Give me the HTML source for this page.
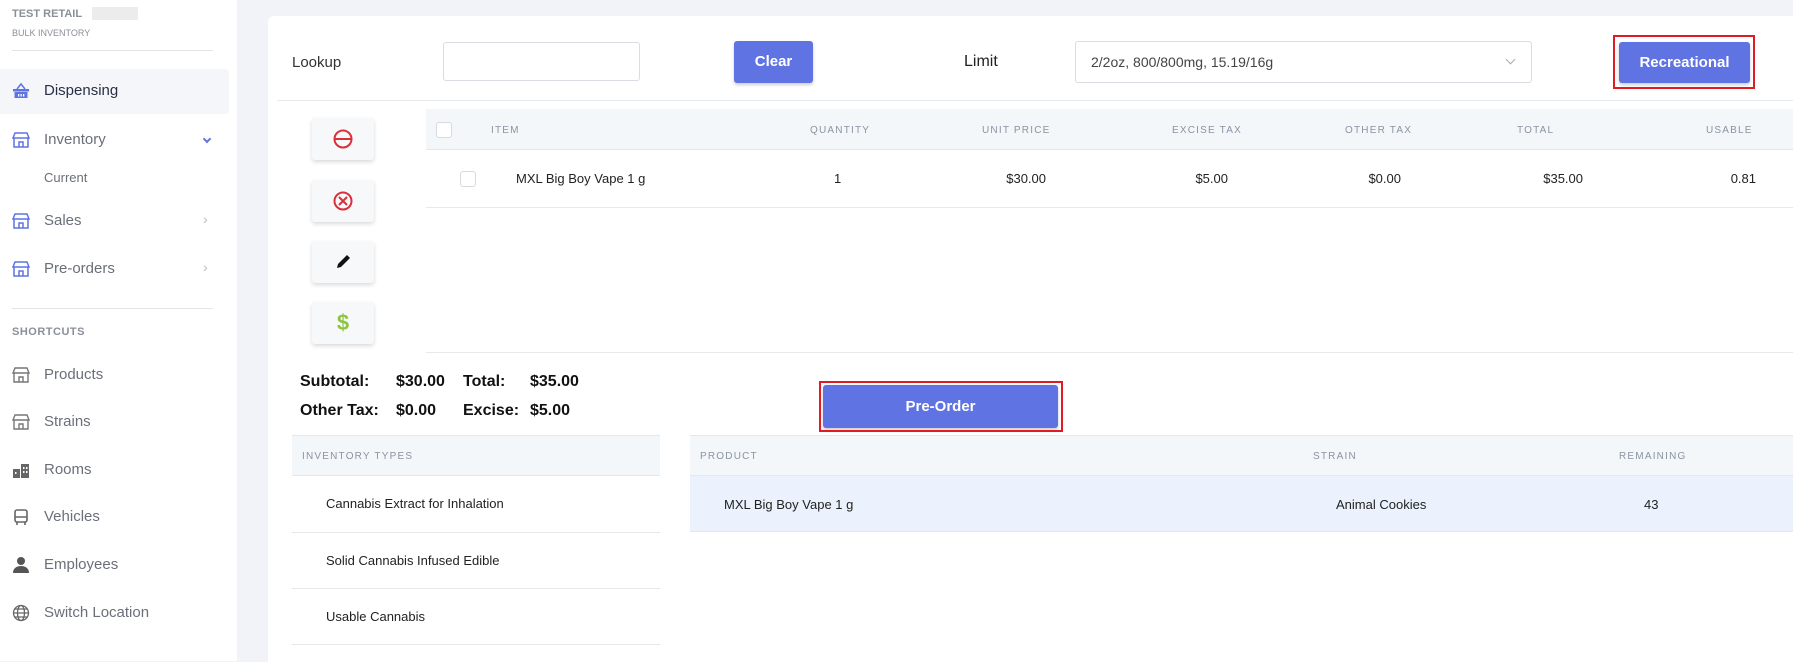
<!DOCTYPE html>
<html><head><meta charset="utf-8"><style>
*{box-sizing:border-box;margin:0;padding:0}
body{width:1793px;height:661px;overflow:hidden;background:#f1f3f8;font-family:"Liberation Sans",sans-serif;position:relative;color:#222}
.a{position:absolute;white-space:nowrap}
#side{position:absolute;left:0;top:0;width:237px;height:661px;background:#fff}
.nav{position:absolute;left:44px;font-size:15px;color:#6b6f7a}
.ic{position:absolute;left:12px;width:18px;height:18px}
#card{position:absolute;left:268px;top:16px;width:1525px;height:646px;background:#fff;border-radius:6px 0 0 0}
.btn{position:absolute;background:#5f73e3;color:#fff;font-weight:bold;font-size:15px;border-radius:3px;text-align:center;box-shadow:0 2px 3px rgba(0,0,0,.2)}
.th{position:absolute;font-size:10px;letter-spacing:1.2px;color:#8a93a3}
.td{position:absolute;font-size:13px;color:#222}
.ab{position:absolute;left:312px;width:62px;height:42px;background:#f7f8fa;border-radius:3px;box-shadow:0 2px 4px rgba(0,0,0,.15)}
.cb{position:absolute;width:16px;height:16px;border:1px solid #d6d9df;border-radius:3px;background:#fff}
.tot{position:absolute;font-size:16px;font-weight:bold;color:#111}
.red{position:absolute;border:2px solid #e01b24}
.chev{position:absolute;left:203px;color:#bbb;font-size:14px}
</style></head><body>
<div id="side">
<div class="a" style="left:12px;top:8px;font-size:11px;font-weight:bold;color:#8a8f99">TEST RETAIL</div>
<div class="a" style="left:92px;top:7px;width:46px;height:13px;background:#ececec"></div>
<div class="a" style="left:12px;top:28px;font-size:9px;color:#8a8f99">BULK INVENTORY</div>
<div class="a" style="left:12px;top:50px;width:201px;height:1px;background:#e2e4e8"></div>
<div class="a" style="left:0;top:69px;width:229px;height:45px;background:#f4f6fa;border-radius:0 4px 4px 0"></div>
<svg class="ic" style="top:82px" viewBox="0 0 18 18"><path d="M5 7 L9 2 L13 7" stroke="#5f73e3" stroke-width="1.5" fill="none"/><rect x="1" y="7" width="16" height="2.5" fill="#5f73e3"/><rect x="2.5" y="10" width="13" height="6" fill="#5f73e3"/><rect x="6" y="12" width="1.3" height="2.5" fill="#fff"/><rect x="8.5" y="12" width="1.3" height="2.5" fill="#fff"/><rect x="11" y="12" width="1.3" height="2.5" fill="#fff"/></svg>
<div class="nav" style="top:82px;color:#2b2f45">Dispensing</div>
<svg class="ic" style="top:131px" viewBox="0 0 18 18" fill="none" stroke="#5f73e3" stroke-width="1.5"><path d="M3 2h12l2 5H1z"/><path d="M2 7v9h14V7M7 16v-5h4v5"/></svg>
<div class="nav" style="top:131px">Inventory</div>
<div class="a" style="left:204px;top:136px;width:6px;height:6px;border-right:2px solid #5f73e3;border-bottom:2px solid #5f73e3;transform:rotate(45deg)"></div>
<div class="nav" style="top:170px;font-size:13px">Current</div>
<svg class="ic" style="top:212px" viewBox="0 0 18 18" fill="none" stroke="#5f73e3" stroke-width="1.5"><path d="M3 2h12l2 5H1z"/><path d="M2 7v9h14V7M7 16v-5h4v5"/></svg>
<div class="nav" style="top:212px">Sales</div>
<div class="chev" style="top:211px">&#8250;</div>
<svg class="ic" style="top:260px" viewBox="0 0 18 18" fill="none" stroke="#5f73e3" stroke-width="1.5"><path d="M3 2h12l2 5H1z"/><path d="M2 7v9h14V7M7 16v-5h4v5"/></svg>
<div class="nav" style="top:260px">Pre-orders</div>
<div class="chev" style="top:259px">&#8250;</div>
<div class="a" style="left:12px;top:308px;width:201px;height:1px;background:#e2e4e8"></div>
<div class="a" style="left:12px;top:326px;font-size:11px;font-weight:bold;color:#8a8f99;letter-spacing:.5px">SHORTCUTS</div>
<svg class="ic" style="top:366px" viewBox="0 0 18 18" fill="none" stroke="#777" stroke-width="1.4"><path d="M3 2h12l2 5H1z"/><path d="M2 7v9h14V7M7 16v-5h4v5"/></svg>
<div class="nav" style="top:366px">Products</div>
<svg class="ic" style="top:413px" viewBox="0 0 18 18" fill="none" stroke="#777" stroke-width="1.4"><path d="M3 2h12l2 5H1z"/><path d="M2 7v9h14V7M7 16v-5h4v5"/></svg>
<div class="nav" style="top:413px">Strains</div>
<svg class="ic" style="top:461px" viewBox="0 0 18 18" fill="#666"><rect x="1" y="8" width="7" height="9"/><rect x="9" y="3" width="8" height="14"/><rect x="3" y="11" width="1.5" height="2" fill="#fff"/><rect x="11" y="6" width="1.5" height="2" fill="#fff"/><rect x="14" y="6" width="1.5" height="2" fill="#fff"/><rect x="11" y="10" width="1.5" height="2" fill="#fff"/><rect x="14" y="10" width="1.5" height="2" fill="#fff"/></svg>
<div class="nav" style="top:461px">Rooms</div>
<svg class="ic" style="top:508px" viewBox="0 0 18 18" fill="none" stroke="#666" stroke-width="1.6"><rect x="3" y="2" width="12" height="12" rx="2"/><path d="M3 9h12M5 14v3M13 14v3"/></svg>
<div class="nav" style="top:508px">Vehicles</div>
<svg class="ic" style="top:556px" viewBox="0 0 18 18" fill="#555"><circle cx="9" cy="5" r="4"/><path d="M1 17c0-5 4-7 8-7s8 2 8 7z"/></svg>
<div class="nav" style="top:556px">Employees</div>
<svg class="ic" style="top:604px" viewBox="0 0 18 18" fill="none" stroke="#666" stroke-width="1.3"><circle cx="9" cy="9" r="7.5"/><ellipse cx="9" cy="9" rx="3.5" ry="7.5"/><path d="M1.5 9h15M3 5h12M3 13h12"/></svg>
<div class="nav" style="top:604px">Switch Location</div>
</div>

<div id="card"></div>
<div class="a" style="left:292px;top:54px;font-size:15px;color:#333">Lookup</div>
<div class="a" style="left:443px;top:42px;width:197px;height:39px;border:1px solid #d9dce2;border-radius:3px"></div>
<div class="btn" style="left:734px;top:41px;width:79px;height:42px;line-height:42px">Clear</div>
<div class="a" style="left:964px;top:53px;font-size:16px;color:#222">Limit</div>
<div class="a" style="left:1075px;top:41px;width:457px;height:42px;border:1px solid #d9dce2;border-radius:3px"></div>
<div class="a" style="left:1091px;top:54px;font-size:14px;color:#444">2/2oz, 800/800mg, 15.19/16g</div>
<div class="a" style="left:1507px;top:56px;width:7px;height:7px;border-right:1px solid #aaa;border-bottom:1px solid #aaa;transform:rotate(45deg)"></div>
<div class="btn" style="left:1619px;top:42px;width:131px;height:41px;line-height:41px">Recreational</div>
<div class="red" style="left:1613px;top:35px;width:142px;height:54px"></div>
<div class="a" style="left:277px;top:100px;width:1516px;height:1px;background:#e6e8ec"></div>

<div class="ab" style="top:118px"><svg style="position:absolute;left:21px;top:11px" width="20" height="20" viewBox="0 0 20 20" fill="none" stroke="#d9303a" stroke-width="2"><circle cx="10" cy="10" r="8.5"/><path d="M2 10h16"/></svg></div>
<div class="ab" style="top:180px"><svg style="position:absolute;left:21px;top:11px" width="20" height="20" viewBox="0 0 20 20" fill="none" stroke="#d9303a" stroke-width="2"><circle cx="10" cy="10" r="8.5"/><path d="M6 6l8 8M14 6l-8 8"/></svg></div>
<div class="ab" style="top:241px"><svg style="position:absolute;left:22px;top:12px" width="18" height="18" viewBox="0 0 18 18"><path d="M3 15l1-4 9-9 3 3-9 9z" fill="#111"/></svg></div>
<div class="ab" style="top:302px"><div style="position:absolute;left:0;width:62px;top:8px;text-align:center;font-size:22px;font-weight:bold;color:#8cc63f">$</div></div>

<div class="a" style="left:426px;top:109px;width:1367px;height:41px;background:#f4f7fa;border-bottom:1px solid #e4e8ee"></div>
<div class="cb" style="left:436px;top:122px"></div>
<div class="th" style="left:491px;top:125px">ITEM</div>
<div class="th" style="left:810px;top:125px">QUANTITY</div>
<div class="th" style="left:982px;top:125px">UNIT PRICE</div>
<div class="th" style="left:1172px;top:125px">EXCISE TAX</div>
<div class="th" style="left:1345px;top:125px">OTHER TAX</div>
<div class="th" style="left:1517px;top:125px">TOTAL</div>
<div class="th" style="left:1706px;top:125px">USABLE</div>
<div class="cb" style="left:460px;top:171px"></div>
<div class="td" style="left:516px;top:171px">MXL Big Boy Vape 1 g</div>
<div class="td" style="left:834px;top:171px">1</div>
<div class="td" style="left:946px;width:100px;text-align:right;top:171px">$30.00</div>
<div class="td" style="left:1128px;width:100px;text-align:right;top:171px">$5.00</div>
<div class="td" style="left:1301px;width:100px;text-align:right;top:171px">$0.00</div>
<div class="td" style="left:1483px;width:100px;text-align:right;top:171px">$35.00</div>
<div class="td" style="left:1656px;width:100px;text-align:right;top:171px">0.81</div>
<div class="a" style="left:426px;top:207px;width:1367px;height:1px;background:#e6e8ec"></div>
<div class="a" style="left:426px;top:352px;width:1367px;height:1px;background:#e6e8ec"></div>

<div class="tot" style="left:300px;top:373px">Subtotal:</div>
<div class="tot" style="left:396px;top:373px">$30.00</div>
<div class="tot" style="left:463px;top:373px">Total:</div>
<div class="tot" style="left:530px;top:373px">$35.00</div>
<div class="tot" style="left:300px;top:402px">Other Tax:</div>
<div class="tot" style="left:396px;top:402px">$0.00</div>
<div class="tot" style="left:463px;top:402px">Excise:</div>
<div class="tot" style="left:530px;top:402px">$5.00</div>
<div class="btn" style="left:823px;top:385px;width:235px;height:43px;line-height:43px">Pre-Order</div>
<div class="red" style="left:819px;top:381px;width:244px;height:51px"></div>

<div class="a" style="left:292px;top:435px;width:368px;height:41px;background:#f4f7fa;border-top:1px solid #e4e8ee;border-bottom:1px solid #e4e8ee"></div>
<div class="th" style="left:302px;top:451px">INVENTORY TYPES</div>
<div class="td" style="left:326px;top:496px">Cannabis Extract for Inhalation</div>
<div class="a" style="left:292px;top:532px;width:368px;height:1px;background:#e6e8ec"></div>
<div class="td" style="left:326px;top:553px">Solid Cannabis Infused Edible</div>
<div class="a" style="left:292px;top:588px;width:368px;height:1px;background:#e6e8ec"></div>
<div class="td" style="left:326px;top:609px">Usable Cannabis</div>
<div class="a" style="left:292px;top:644px;width:368px;height:1px;background:#e6e8ec"></div>

<div class="a" style="left:690px;top:435px;width:1103px;height:41px;background:#f4f7fa;border-top:1px solid #e4e8ee;border-bottom:1px solid #e4e8ee"></div>
<div class="th" style="left:700px;top:451px">PRODUCT</div>
<div class="th" style="left:1313px;top:451px">STRAIN</div>
<div class="th" style="left:1619px;top:451px">REMAINING</div>
<div class="a" style="left:690px;top:476px;width:1103px;height:56px;background:#ebf2fd;border-bottom:1px solid #e4e8ee"></div>
<div class="td" style="left:724px;top:497px">MXL Big Boy Vape 1 g</div>
<div class="td" style="left:1336px;top:497px">Animal Cookies</div>
<div class="td" style="left:1644px;top:497px">43</div>
</body></html>
